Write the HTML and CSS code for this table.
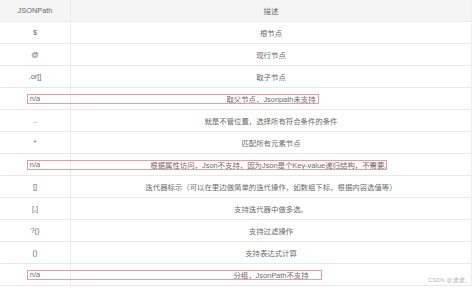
FILE: index.html
```html
<!DOCTYPE html>
<html lang="zh">
<head>
<meta charset="utf-8">
<title>JSONPath</title>
<link rel="stylesheet" href="styles.css">
</head>
<body>
<div class="table">
  <div class="row head"><div class="c1">JSONPath</div><div class="c2">描述</div></div>
  <div class="row"><div class="c1">$</div><div class="c2">根节点</div></div>
  <div class="row"><div class="c1">@</div><div class="c2">现行节点</div></div>
  <div class="row"><div class="c1">.or[]</div><div class="c2">取子节点</div></div>
  <div class="row"><div class="c1">n/a</div><div class="c2">取父节点，Jsonpath未支持</div><span class="mark mark-a"></span></div>
  <div class="row"><div class="c1">..</div><div class="c2">就是不管位置，选择所有符合条件的条件</div></div>
  <div class="row"><div class="c1">*</div><div class="c2">匹配所有元素节点</div></div>
  <div class="row"><div class="c1">n/a</div><div class="c2">根据属性访问，Json不支持，因为Json是个Key-value递归结构，不需要。</div><span class="mark mark-b"></span></div>
  <div class="row"><div class="c1">[]</div><div class="c2">迭代器标示（可以在里边做简单的迭代操作，如数组下标，根据内容选值等）</div></div>
  <div class="row"><div class="c1">[,]</div><div class="c2">支持迭代器中做多选。</div></div>
  <div class="row"><div class="c1">?()</div><div class="c2">支持过滤操作</div></div>
  <div class="row"><div class="c1">()</div><div class="c2">支持表达式计算</div></div>
  <div class="row"><div class="c1">n/a</div><div class="c2">分组，JsonPath不支持</div><span class="mark mark-c"></span></div>
  <span class="watermark">CSDN @波波_</span>
</div>
</body>
</html>
```
FILE: styles.css
```css
html, body {
  margin: 0;
  padding: 0;
  background: #ffffff;
}
body {
  font-family: "Liberation Sans", Arial, "Noto Sans CJK SC", sans-serif;
  font-size: 7.4px;
  color: #6a6a6a;
}
.table {
  position: relative;
  width: 471px;
  border-right: 1px solid #efefef;
}
.row {
  position: relative;
  display: grid;
  grid-template-columns: 71px 1fr;
  height: 21px;
  border-bottom: 1px solid #e9e9e9;
}
.row.head {
  background: #f5f5f5;
}
.c1, .c2 {
  display: flex;
  align-items: center;
  justify-content: center;
  white-space: nowrap;
}
.c1 {
  border-right: 1px solid #ececec;
}
.mark {
  position: absolute;
  left: 27px;
  top: 6px;
  height: 8px;
  border: 1px solid #ec9aa1;
}
.mark-a { width: 290px; }
.mark-b { width: 358px; }
.mark-c { width: 293px; }
.watermark {
  position: absolute;
  right: 3px;
  bottom: 2px;
  font-size: 6px;
  color: #b8b8b8;
}
```
